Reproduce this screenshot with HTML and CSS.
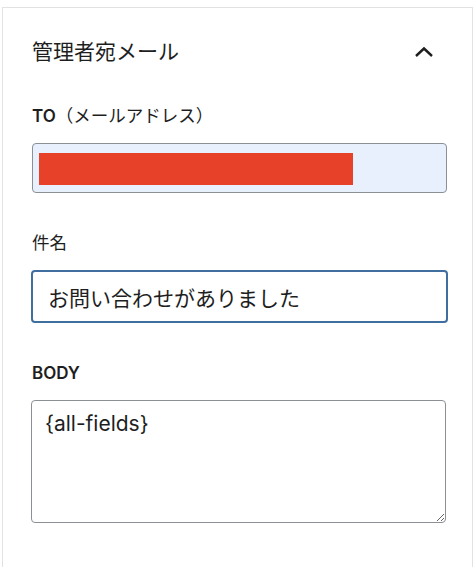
FILE: index.html
```html
<!DOCTYPE html>
<html lang="ja">
<head>
    <meta charset="UTF-8">
    <meta name="viewport" content="width=device-width, initial-scale=1.0">
    <title>管理者宛メール</title>
    <link rel="stylesheet" href="styles.css">
</head>
<body>

    <div class="panel">
        <!-- パネル見出し -->
        <div class="panel-head">
            <h2 class="panel-title">管理者宛メール</h2>
            <svg class="chevron" width="20" height="12" viewBox="0 0 20 12">
                <polyline points="2,10 10,2.5 18,10" fill="none" stroke="#1e1e1e" stroke-width="2.4"/>
            </svg>
        </div>

        <!-- 宛先 -->
        <div class="field field-first">
            <label class="field-label"><span class="caps">TO</span>（メールアドレス）</label>
            <div class="text-input autofill"><span class="redacted"></span></div>
        </div>

        <!-- 件名 -->
        <div class="field">
            <label class="field-label" for="subject">件名</label>
            <input type="text" id="subject" class="text-input focused" value="お問い合わせがありました">
        </div>

        <!-- 本文 -->
        <div class="field">
            <label class="field-label caps" for="body">BODY</label>
            <textarea id="body" class="text-area">{all-fields}</textarea>
        </div>
    </div>

</body>
</html>
```

FILE: styles.css
```css
body {
    margin: 0;
    background: white;
    font-family: "Liberation Sans", "Noto Sans CJK JP", sans-serif;
    color: #1e1e1e;
}
.panel {
    margin: 7px 1px 0 2px;
    border: 1px solid #e2e2e2;
    border-bottom: none;
    min-height: 560px;
    padding: 0 24px 0 29px;
}
.panel-head {
    display: flex;
    align-items: center;
    justify-content: space-between;
    padding-top: 29px;
}
.panel-title {
    margin: 0;
    font-size: 21px;
    line-height: 30px;
    font-weight: 400;
}
.chevron {
    margin-right: 14px;
}
.field {
    margin-top: 38px;
}
.field-first {
    margin-top: 37px;
}
.field-label {
    display: block;
    font-size: 17.5px;
    line-height: 24px;
    margin-bottom: 15px;
}
.caps {
    font-family: Inter, "Noto Sans CJK JP", sans-serif;
    font-weight: 600;
    font-size: 17px;
}
.text-input {
    display: block;
    box-sizing: border-box;
    width: 415px;
    height: 50px;
    border: 1px solid #8c8f94;
    border-radius: 4px;
    background: white;
    font-family: "Liberation Sans", "Noto Sans CJK JP", sans-serif;
    font-size: 21px;
    color: #1e1e1e;
    padding: 0 16px;
    outline: none;
}
.autofill {
    background: #e8f0fe;
    padding: 9px 0 0 6px;
}
.redacted {
    display: block;
    width: 314px;
    height: 32px;
    background: #e8412a;
}
.focused {
    width: 417px;
    height: 53px;
    margin-left: -1px;
    border: 2px solid #3f6e9f;
    padding: 0 15px;
}
.text-area {
    display: block;
    box-sizing: border-box;
    width: 415px;
    height: 123px;
    margin: 0 0 0 -1px;
    border: 1px solid #8c8f94;
    border-radius: 4px;
    font-family: Inter, "Noto Sans CJK JP", sans-serif;
    font-size: 21px;
    line-height: 30px;
    color: #1e1e1e;
    padding: 8px 13px;
    resize: both;
    outline: none;
}
```
